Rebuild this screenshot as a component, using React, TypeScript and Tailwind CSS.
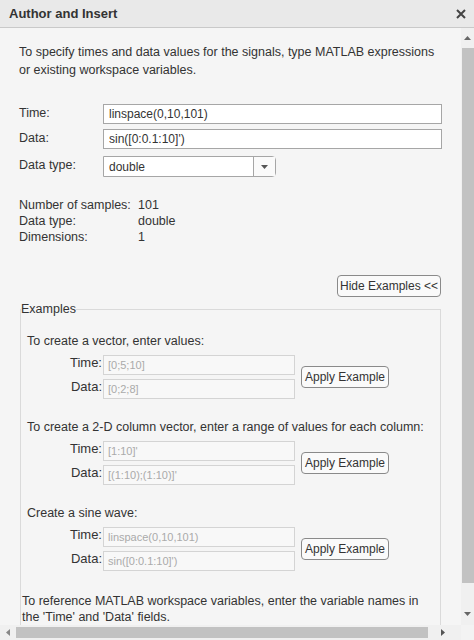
import React from "react";

const font = { fontFamily: '"Liberation Sans", Arial, sans-serif' };

function FieldRow({ label, value }: { label: string; value: string }) {
  return (
    <div className="flex items-start">
      <div className="w-[84px] text-[12.5px] leading-[18px]">{label}</div>
      <div className="flex h-[20px] w-[339px] items-center border border-[#a6a6a6] bg-white px-[5px] text-[12px] text-[#333]">
        {value}
      </div>
    </div>
  );
}

function ExampleBlock({ title, time, data, first }: { title: string; time: string; data: string; first?: boolean }) {
  return (
    <div className={first ? "" : "mt-[19px]"}>
      <div className="pl-[6px] text-[12.5px] leading-[18px]">{title}</div>
      <div className="mt-[5px] flex items-center">
        <div className="flex flex-col gap-[4px]">
          {[
            ["Time:", time],
            ["Data:", data],
          ].map(([label, value]) => (
            <div key={label} className="flex items-start">
              <div className="w-[82px] pr-[1px] text-right text-[13px] leading-[15px]">{label}</div>
              <div className="flex h-[20px] w-[192px] items-center border border-[#d4d4d4] bg-[#f8f8f8] px-[4px] text-[11px] text-[#aaaaaa]">
                {value}
              </div>
            </div>
          ))}
        </div>
        <button className="ml-[6px] h-[22px] w-[88px] rounded-[4px] border border-[#8a8a8a] bg-[#fafafa] text-[12px] text-[#333]">
          Apply Example
        </button>
      </div>
    </div>
  );
}

export default function App() {
  return (
    <div style={font} className="flex h-[640px] w-[474px] flex-col overflow-hidden bg-[#f5f5f5] text-[#333]">
      <div className="flex h-[28px] shrink-0 items-center justify-between border-b border-[#c9c9c9] bg-[#e9e9e9] pl-[9px] pr-[8px]">
        <span className="text-[13px] font-bold text-[#333]">Author and Insert</span>
        <svg width="10" height="10" viewBox="0 0 10 10">
          <path d="M1 1 L9 9 M9 1 L1 9" stroke="#444" strokeWidth="2" />
        </svg>
      </div>

      <div className="flex h-[597px] shrink-0">
        <div className="flex-1 overflow-hidden pl-[19px] pt-[15px]">
          <p className="w-[424px] text-[12.5px] leading-[18px]">
            To specify times and data values for the signals, type MATLAB expressions or existing workspace variables.
          </p>

          <div className="mt-[25px] flex flex-col gap-[5px]">
            <FieldRow label="Time:" value="linspace(0,10,101)" />
            <FieldRow label="Data:" value="sin([0:0.1:10]')" />
            <div className="mt-[2px] flex items-start">
              <div className="w-[84px] text-[12.5px] leading-[18px]">Data type:</div>
              <div className="flex h-[21px] w-[173px] items-stretch rounded-r-[4px] border border-[#a6a6a6] bg-white">
                <div className="flex flex-1 items-center px-[5px] text-[12px]">double</div>
                <div className="flex w-[22px] items-center justify-center border-l border-[#a6a6a6] bg-[#fafafa]">
                  <svg width="7" height="4" viewBox="0 0 7 4">
                    <path d="M0 0 L7 0 L3.5 4 Z" fill="#555" />
                  </svg>
                </div>
              </div>
            </div>
          </div>

          <div className="mt-[20px] text-[12.5px] leading-[16px]">
            <div className="flex">
              <span className="w-[119px]">Number of samples:</span>
              <span>101</span>
            </div>
            <div className="flex">
              <span className="w-[119px]">Data type:</span>
              <span>double</span>
            </div>
            <div className="flex">
              <span className="w-[119px]">Dimensions:</span>
              <span>1</span>
            </div>
          </div>

          <div className="mr-[20px] mt-[30px] flex justify-end">
            <button className="h-[22px] w-[104px] rounded-[4px] border border-[#8a8a8a] bg-[#fafafa] text-[12px] text-[#333]">
              Hide Examples &lt;&lt;
            </button>
          </div>

          <fieldset className="ml-[1px] mr-[20px] mt-[4px] border border-[#dadada] pb-[20px]">
            <legend className="text-[12.5px] leading-[16px]">Examples</legend>
            <div className="pt-[15px]">
              <ExampleBlock first title="To create a vector, enter values:" time="[0;5;10]" data="[0;2;8]" />
              <ExampleBlock
                title="To create a 2-D column vector, enter a range of values for each column:"
                time="[1:10]'"
                data="[(1:10);(1:10)]'"
              />
              <ExampleBlock title="Create a sine wave:" time="linspace(0,10,101)" data="sin([0:0.1:10]')" />
              <p className="mt-[22px] w-[410px] pl-[1px] text-[12.5px] leading-[16px]">
                To reference MATLAB workspace variables, enter the variable names in the 'Time' and 'Data' fields.
              </p>
            </div>
          </fieldset>
        </div>

        <div className="flex w-[13px] shrink-0 flex-col bg-[#f0f0f0]">
          <div className="flex h-[20px] items-center justify-center">
            <svg width="7" height="4" viewBox="0 0 7 4">
              <path d="M3.5 0 L7 4 L0 4 Z" fill="#666" />
            </svg>
          </div>
          <div className="ml-[1px] h-[535px] bg-[#c2c2c2]" />
          <div className="flex-1" />
          <div className="flex h-[22px] items-center justify-center">
            <svg width="7" height="4" viewBox="0 0 7 4">
              <path d="M0 0 L7 0 L3.5 4 Z" fill="#666" />
            </svg>
          </div>
        </div>
      </div>

      <div className="flex h-[15px] shrink-0 items-center bg-[#f0f0f0]">
        <div className="flex w-[16px] justify-center">
          <svg width="4" height="7" viewBox="0 0 4 7">
            <path d="M4 0 L4 7 L0 3.5 Z" fill="#888" />
          </svg>
        </div>
        <div className="h-[11px] w-[412px] bg-[#c2c2c2]" />
        <div className="flex flex-1 justify-center pr-[3px]">
          <svg width="4" height="7" viewBox="0 0 4 7">
            <path d="M0 0 L4 3.5 L0 7 Z" fill="#555" />
          </svg>
        </div>
        <div className="h-full w-[13px] bg-[#f3f3f3]" />
      </div>
    </div>
  );
}
